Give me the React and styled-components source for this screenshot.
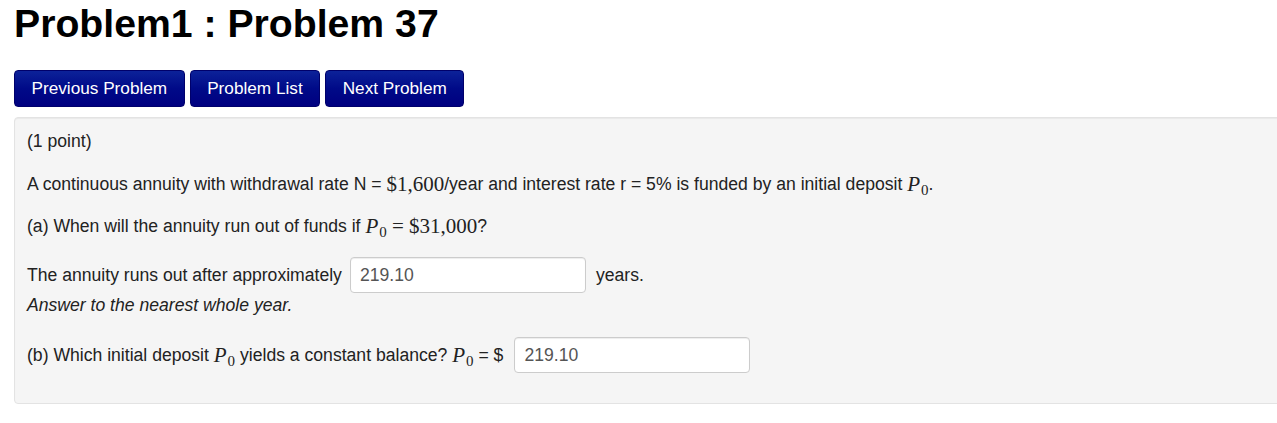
import styled, { createGlobalStyle } from 'styled-components';

const GlobalStyle = createGlobalStyle`
  html, body {
    margin: 0;
    padding: 0;
    background: #ffffff;
    overflow-x: hidden;
  }
  body {
    font-family: "Liberation Sans", Arial, sans-serif;
    color: #222;
  }
`;

const Page = styled.div`
  padding: 0 0 0 14px;
`;

const Title = styled.h1`
  margin: 2px 0 0 0;
  font-size: 39.2px;
  line-height: 44px;
  font-weight: bold;
  color: #000;
`;

const NavBar = styled.div`
  display: flex;
  gap: 5px;
  margin-top: 24px;
`;

const NavButton = styled.button`
  height: 37px;
  padding: 0 16.5px;
  border: 1px solid #00006b;
  border-radius: 4px;
  background: linear-gradient(to bottom, #0c2299 0%, #000a88 50%, #000080 100%);
  color: #fff;
  font-family: "Liberation Sans", Arial, sans-serif;
  font-size: 17.2px;
  cursor: pointer;
`;

const Panel = styled.div`
  margin-top: 10px;
  width: 1290px;
  padding: 11px 12px 30px 12px;
  background: #f5f5f5;
  border: 1px solid #e3e3e3;
  border-radius: 4px;
  box-shadow: inset 0 1px 1px rgba(0, 0, 0, 0.05);
  box-sizing: border-box;
  font-size: 17.6px;
  line-height: 25px;
`;

const Line = styled.div`
  display: flex;
  align-items: center;
  margin-top: ${(p) => p.$top || 0}px;
  font-style: ${(p) => (p.$italic ? 'italic' : 'normal')};
  white-space: pre;
`;

const Mn = styled.span`
  font-family: "Liberation Serif", "Times New Roman", serif;
  font-size: 21px;
`;

const Mi = styled.span`
  font-family: "Liberation Serif", "Times New Roman", serif;
  font-style: italic;
  font-size: 21px;
`;

const Sub = styled.sub`
  font-family: "Liberation Serif", "Times New Roman", serif;
  font-style: normal;
  font-size: 15px;
  vertical-align: -4px;
  line-height: 0;
  margin-left: 1px;
`;

const AnswerInput = styled.input`
  width: 236px;
  height: 36px;
  box-sizing: border-box;
  margin: 0 ${(p) => p.$after || 0}px 0 ${(p) => p.$before || 0}px;
  padding: 0 9px;
  border: 1px solid #ccc;
  border-radius: 4px;
  background: #fff;
  box-shadow: inset 0 1px 1px rgba(0, 0, 0, 0.075);
  color: #555;
  font-family: "Liberation Sans", Arial, sans-serif;
  font-size: 17.6px;
  outline: none;
`;

function P0() {
  return (
    <Mi>
      P<Sub>0</Sub>
    </Mi>
  );
}

export default function App() {
  return (
    <Page>
      <GlobalStyle />
      <Title>Problem1 : Problem 37</Title>
      <NavBar>
        <NavButton>Previous Problem</NavButton>
        <NavButton>Problem List</NavButton>
        <NavButton>Next Problem</NavButton>
      </NavBar>
      <Panel>
        <Line>(1 point)</Line>
        <Line $top={18}>
          A continuous annuity with withdrawal rate N = <Mn>$1,600</Mn>/year and interest rate r = 5% is funded by an initial deposit <P0 />.
        </Line>
        <Line $top={17}>
          (a) When will the annuity run out of funds if <P0 />
          <Mn> = $31,000</Mn>?
        </Line>
        <Line $top={18}>
          The annuity runs out after approximately
          <AnswerInput $before={8} $after={10} defaultValue="219.10" />
          years.
        </Line>
        <Line $italic>Answer to the nearest whole year.</Line>
        <Line $top={19}>
          (b) Which initial deposit <P0 /> yields a constant balance? <P0 /> = $
          <AnswerInput $before={11} defaultValue="219.10" />
        </Line>
      </Panel>
    </Page>
  );
}
